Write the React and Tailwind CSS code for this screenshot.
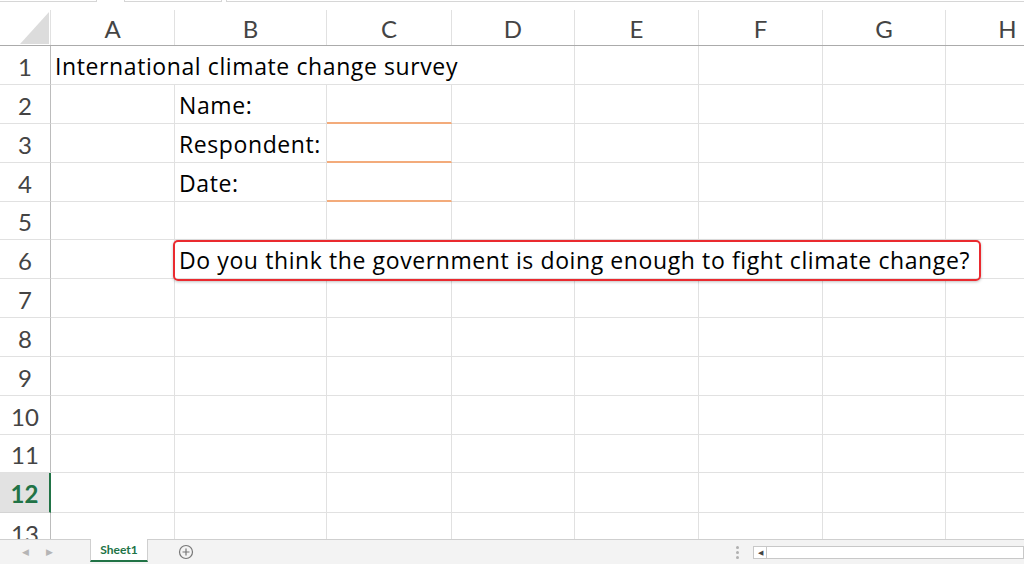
import React from "react"

const font = { fontFamily: "Lato, 'Open Sans', sans-serif" }
const cellFont = { fontFamily: "'Open Sans', Lato, sans-serif" }

const cols = [
  { l: "A", w: "w-[124px]" },
  { l: "B", w: "w-[152px]" },
  { l: "C", w: "w-[125px]" },
  { l: "D", w: "w-[123px]" },
  { l: "E", w: "w-[124px]" },
  { l: "F", w: "w-[124px]" },
  { l: "G", w: "w-[123px]" },
  { l: "H", w: "w-[124px]" },
]

function Cell({ w, children, line, className = "" }) {
  const borders = line
    ? "border-r border-b-2 border-r-[#e1e1e1] border-b-[#f3ab7b]"
    : "border-r border-b border-[#e1e1e1]"
  return (
    <div
      style={cellFont}
      className={`${w} shrink-0 h-full ${borders} flex items-center pt-[3px] px-[4px] whitespace-nowrap text-[23px] tracking-[0.6px] text-black ${className}`}
    >
      {children}
    </div>
  )
}

function Row({ n, h, active, children }) {
  return (
    <div className={`flex ${h} shrink-0`}>
      <div
        className={
          active
            ? "w-[51px] shrink-0 h-full flex items-center justify-center pt-[3px] bg-[#e2e2e2] border-b border-[#d4d4d4] border-r-2 border-r-[#217346] text-[24px] font-bold text-[#217346]"
            : "w-[51px] shrink-0 h-full flex items-center justify-center pt-[3px] border-b border-[#e1e1e1] border-r border-r-[#bcbcbc] text-[24px] text-[#444]"
        }
      >
        {n}
      </div>
      {children}
    </div>
  )
}

function Blank({ from }) {
  return cols.slice(from).map((c) => <Cell key={c.l} w={c.w} />)
}

export default function App() {
  return (
    <div className="w-[1024px] h-[564px] flex flex-col bg-white overflow-hidden" style={font}>
      {/* remains of the name box / formula bar */}
      <div className="h-[10px] flex shrink-0">
        <div className="w-[97px] h-[2px] border-b border-r border-[#d6d6d6]" />
        <div className="w-[27px]" />
        <div className="w-[98px] h-[2px] border-b border-x border-[#d6d6d6]" />
        <div className="w-[4px]" />
        <div className="flex-1 h-[2px] border-b border-l border-[#d6d6d6]" />
      </div>

      <div className="flex-1 flex flex-col overflow-hidden">
        {/* column headers */}
        <div className="flex h-[36px] shrink-0 border-b border-[#ababab]">
          <div className="w-[51px] shrink-0 h-full relative border-r border-[#e1e1e1]">
            <svg className="absolute left-[20px] top-[2px]" width="29" height="32" viewBox="0 0 29 32">
              <polygon points="29,0 29,32 0,32" fill="#dcdcdc" />
            </svg>
          </div>
          {cols.map((c) => (
            <div
              key={c.l}
              className={`${c.w} shrink-0 h-full border-r border-[#e1e1e1] flex items-center justify-center pt-[3px] text-[24px] text-[#444]`}
            >
              {c.l}
            </div>
          ))}
        </div>

        <Row n="1" h="h-[39px]">
          <Cell w="w-[524px]">International climate change survey</Cell>
          <Blank from={4} />
        </Row>
        <Row n="2" h="h-[39px]">
          <Cell w="w-[124px]" />
          <Cell w="w-[152px]">Name:</Cell>
          <Cell w="w-[125px]" line />
          <Blank from={3} />
        </Row>
        <Row n="3" h="h-[39px]">
          <Cell w="w-[124px]" />
          <Cell w="w-[152px]">Respondent:</Cell>
          <Cell w="w-[125px]" line />
          <Blank from={3} />
        </Row>
        <Row n="4" h="h-[39px]">
          <Cell w="w-[124px]" />
          <Cell w="w-[152px]">Date:</Cell>
          <Cell w="w-[125px]" line />
          <Blank from={3} />
        </Row>
        <Row n="5" h="h-[38px]">
          <Blank from={0} />
        </Row>
        <Row n="6" h="h-[39px]">
          <Cell w="w-[124px]" />
          <Cell w="w-[895px]" className="relative">
            Do you think the government is doing enough to fight climate change?
            <div className="absolute left-[-2px] top-0 w-[808px] h-[41px] rounded-[5px] border-2 border-[#ea2a2f] shadow-[0_1px_3px_rgba(0,0,0,0.25)]" />
          </Cell>
        </Row>
        <Row n="7" h="h-[39px]">
          <Blank from={0} />
        </Row>
        <Row n="8" h="h-[39px]">
          <Blank from={0} />
        </Row>
        <Row n="9" h="h-[39px]">
          <Blank from={0} />
        </Row>
        <Row n="10" h="h-[39px]">
          <Blank from={0} />
        </Row>
        <Row n="11" h="h-[38px]">
          <Blank from={0} />
        </Row>
        <Row n="12" h="h-[40px]" active>
          <Blank from={0} />
        </Row>
        <Row n="13" h="h-[39px]">
          <Blank from={0} />
        </Row>
      </div>

      {/* sheet tabs bar */}
      <div className="h-[25px] shrink-0 flex items-stretch bg-[#f3f3f3] border-t border-[#cfcfcf] relative">
        <div className="w-[90px] flex items-center">
          <span className="ml-[22px] text-[9px] text-[#b5b5b5]">◀</span>
          <span className="ml-[17px] text-[9px] text-[#b5b5b5]">▶</span>
        </div>
        <div className="w-[58px] -mt-px bg-white border-x border-[#cfcfcf] border-b-2 border-b-[#217346] flex items-center justify-center text-[12px] font-bold text-[#217346] mb-[2px]">
          Sheet1
        </div>
        <div className="w-[30px]" />
        <div className="flex items-center">
          <svg width="16" height="16" viewBox="0 0 16 16">
            <circle cx="8" cy="8" r="6.5" fill="none" stroke="#777" strokeWidth="1.2" />
            <path d="M8 4.5v7M4.5 8h7" stroke="#777" strokeWidth="1.2" />
          </svg>
        </div>
        <div className="flex-1" />
        <div className="w-[14px] flex flex-col items-center justify-center gap-[2px]">
          <span className="w-[3px] h-[3px] bg-[#b0b0b0] rounded-full" />
          <span className="w-[3px] h-[3px] bg-[#b0b0b0] rounded-full" />
          <span className="w-[3px] h-[3px] bg-[#b0b0b0] rounded-full" />
        </div>
        <div className="w-[9px]" />
        <div className="w-[271px] flex items-center">
          <div className="flex-1 h-[13px] flex bg-white border border-[#c8c8c8]">
            <div className="w-[13px] h-full border-r border-[#c8c8c8] flex items-center justify-center text-[7px] text-[#444]">◀</div>
            <div className="flex-1" />
          </div>
        </div>
      </div>
    </div>
  )
}
